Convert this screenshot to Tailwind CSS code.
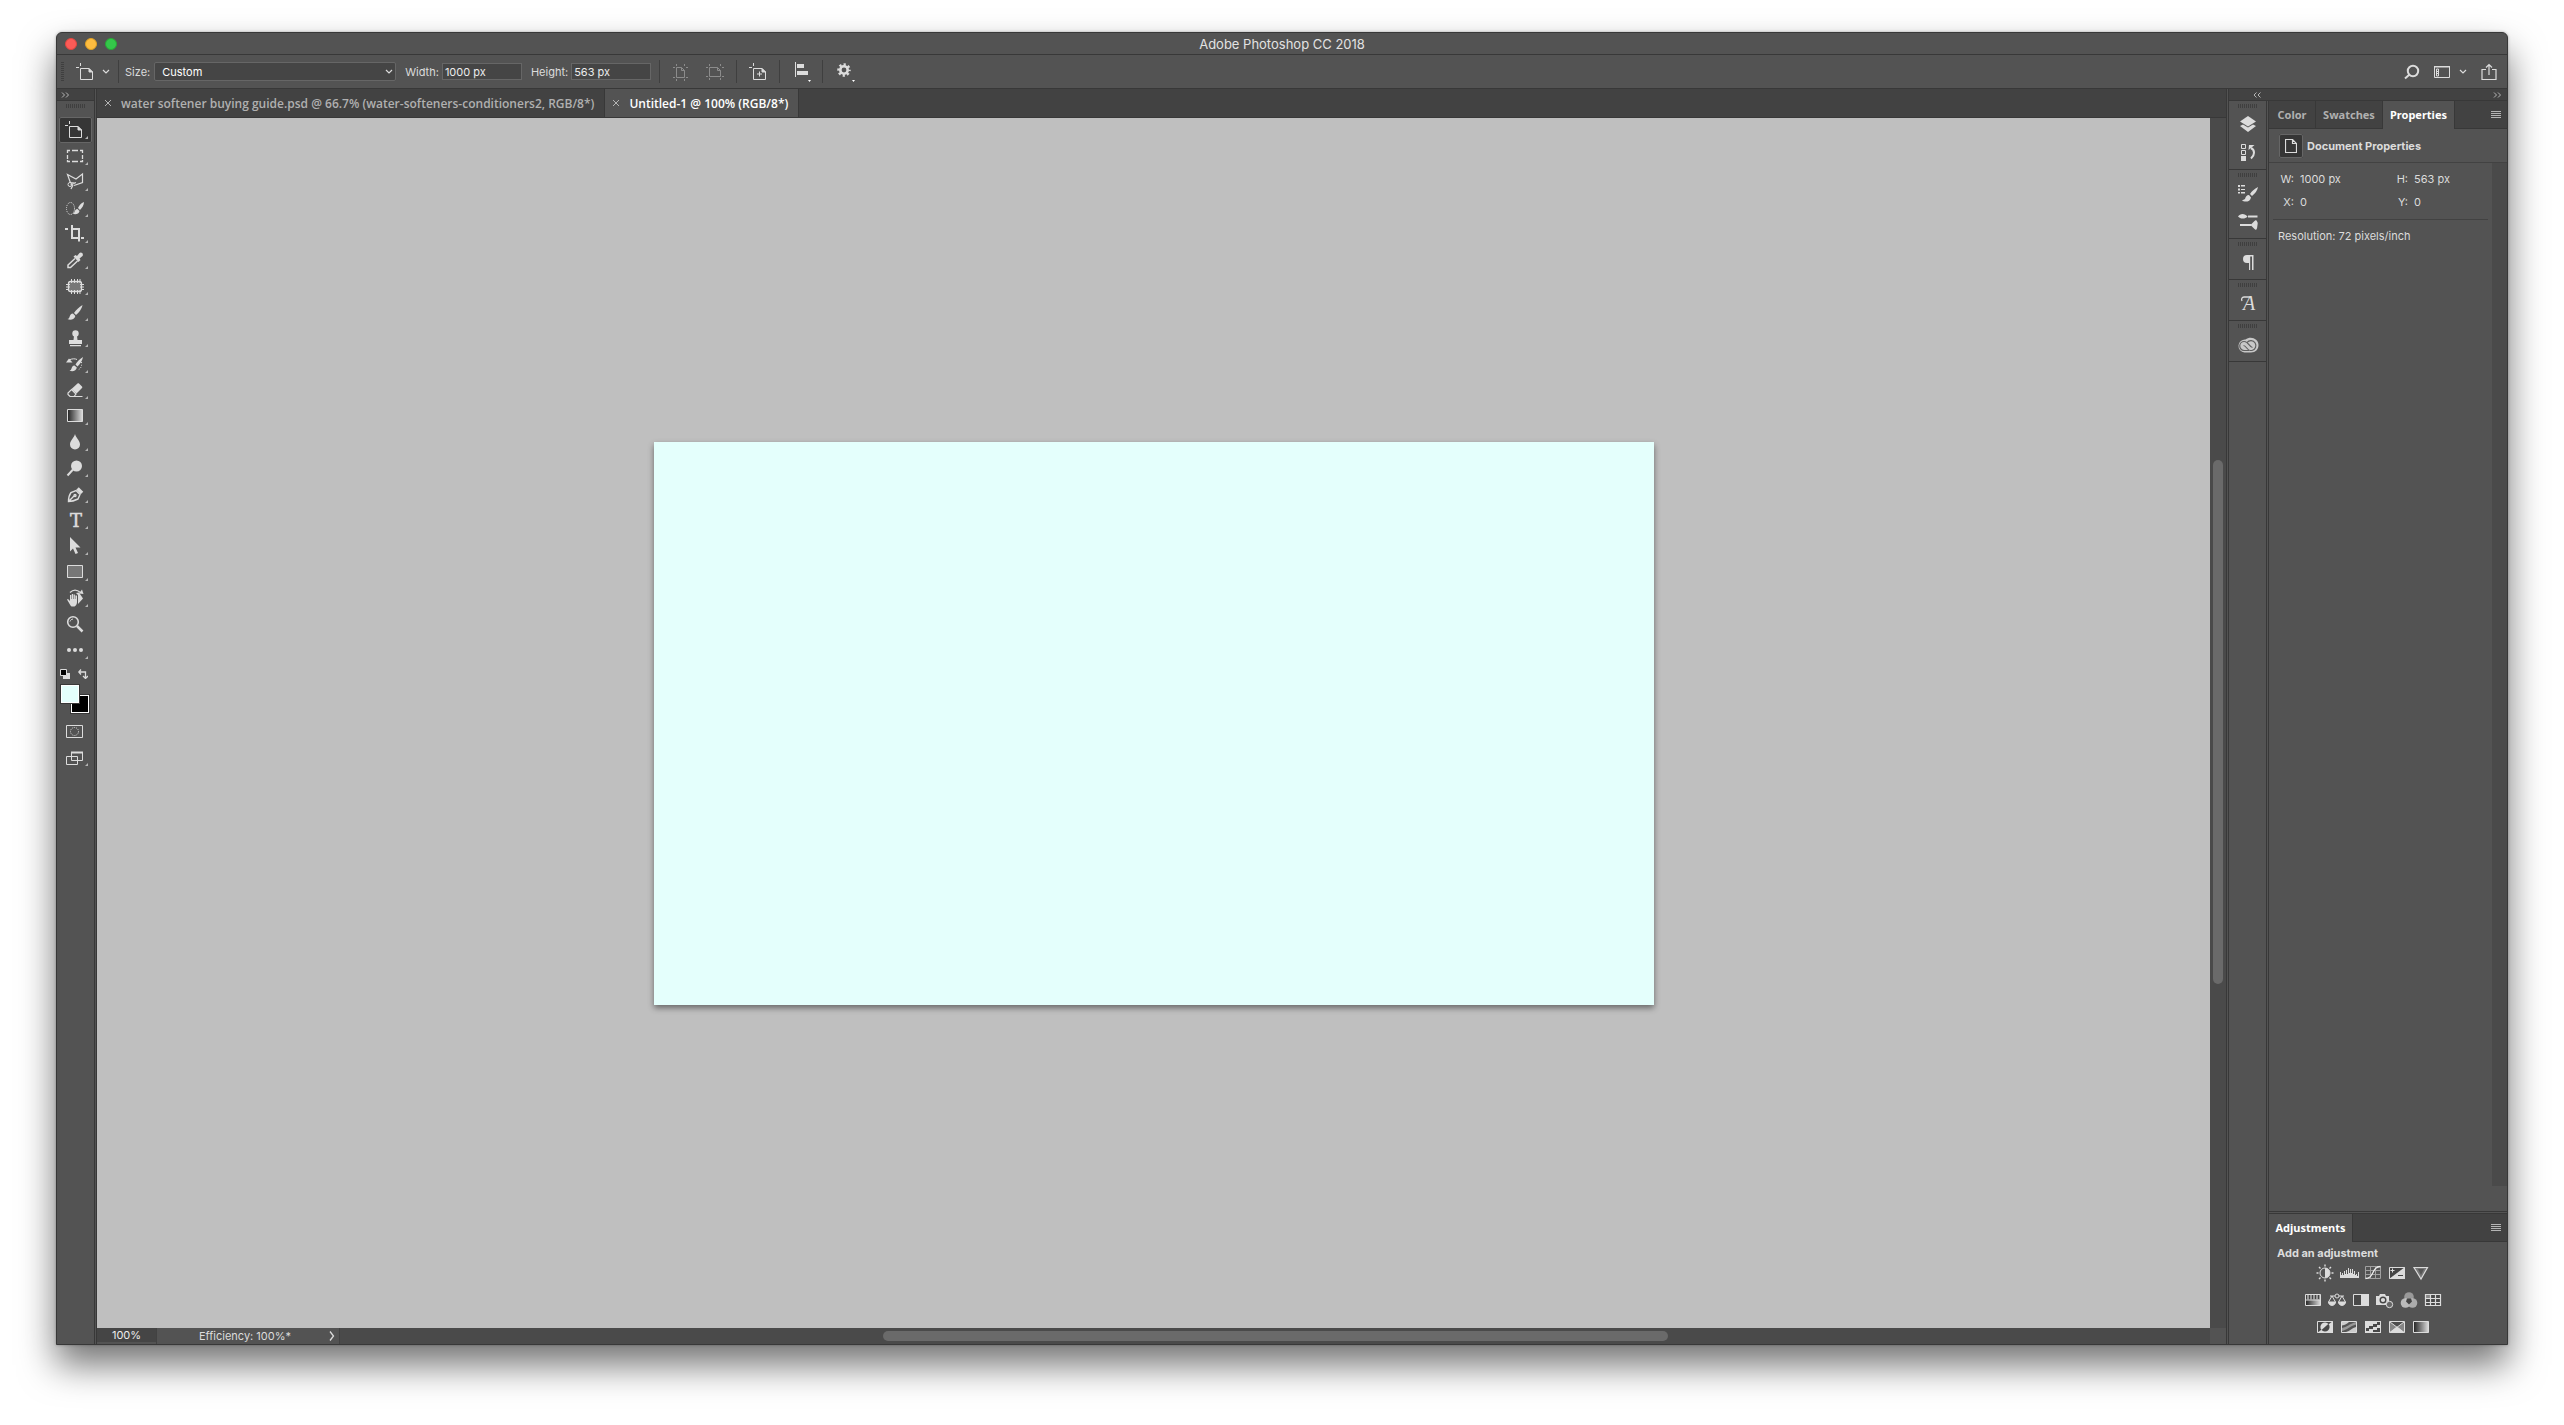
<!DOCTYPE html>
<html lang="en">
<head>
  <meta charset="UTF-8" />
  <meta name="viewport" content="width=device-width, initial-scale=1.0"/>
  <title>Adobe Photoshop CC 2018</title>
  <script src="https://cdn.jsdelivr.net/npm/@tailwindcss/browser@4"></script>
</head>
<body class="bg-white h-screen flex flex-col px-14 pt-8 pb-20 font-['Inter',sans-serif] text-[11px] leading-4 text-[#dcdcdc]">
  <!-- shared icon parts -->
  <svg class="size-0 shrink-0">
    <defs>
      <path id="corner" d="M29 19v3h-3z" fill="#b4b4b4"/>
      <linearGradient id="fade"><stop offset="0" stop-color="#222"/><stop offset="1" stop-color="#ddd"/></linearGradient>
      <symbol id="artboard" viewBox="0 0 18 18"><path d="M4.500 0v3M0 4.500h3" stroke="#dcdcdc" fill="none"/><path d="M4.500 5.500h8.500l3.500 3.500v7.500h-12z" stroke="#dcdcdc" fill="none"/><path d="M13 5.500l3.500 3.500h-3.500z" fill="#dcdcdc" stroke="#dcdcdc"/></symbol>
      <symbol id="grip" viewBox="0 0 20 4"><path d="M0 2h20" stroke="#3f3f3f" stroke-width="4" stroke-dasharray="1 1" fill="none"/></symbol>
      <symbol id="menu" viewBox="0 0 10 8"><path d="M0 .5h10M0 2.500h10M0 4.500h10M0 6.500h10" stroke="#b4b4b4" fill="none"/></symbol>
      <symbol id="down" viewBox="0 0 8 6"><path d="M1 1l3 3 3-3" stroke="#dcdcdc" stroke-width="1.200" fill="none"/></symbol>
      <symbol id="close" viewBox="0 0 8 8"><path d="M1 1l6 6M7 1l-6 6" stroke="#b4b4b4" fill="none"/></symbol>
    </defs>
  </svg>

  <div class="flex-1 min-h-0 flex flex-col rounded-t-md border border-[#383838] bg-[#535353] shadow-[0_20px_36px_rgba(0,0,0,0.55),0_0_3px_rgba(0,0,0,0.3)]">

    <!-- title bar -->
    <header class="h-[22px] shrink-0 flex items-center border-b border-[#383838] px-2">
      <div class="flex-1 flex gap-2">
        <button aria-label="Close" class="size-3 rounded-full bg-[#fc5b57] border border-[#e2463f]"></button>
        <button aria-label="Minimize" class="size-3 rounded-full bg-[#fdbc40] border border-[#dfa023]"></button>
        <button aria-label="Zoom" class="size-3 rounded-full bg-[#34c84a] border border-[#27aa35]"></button>
      </div>
      <h1 class="text-[13px] text-[#e2e2e2]">Adobe Photoshop CC 2018</h1>
      <div class="flex-1"></div>
    </header>

    <!-- options bar -->
    <div class="h-[34px] shrink-0 flex items-center border-b border-[#383838] pl-1">
      <svg class="w-[3px] h-5" viewBox="0 0 3 20"><path d="M1.500 0v20" stroke="#3f3f3f" stroke-width="3" stroke-dasharray="1 1"/></svg>
      <button aria-label="Artboard tool presets" class="ml-3 flex items-center gap-2">
        <svg class="size-[18px]"><use href="#artboard"/></svg>
        <svg class="w-2 h-[6px]"><use href="#down"/></svg>
      </button>
      <div class="ml-2 w-px h-[23px] bg-[#3f3f3f]"></div>
      <label for="size" class="ml-[6px]">Size:</label>
      <div class="relative ml-1">
        <select id="size" class="appearance-none w-[242px] h-[19px] pl-[7px] rounded-xs border border-[#666] bg-[#454545] text-white">
          <option>Custom</option>
        </select>
        <svg class="absolute right-[3px] top-[7px] w-2 h-[6px]"><use href="#down"/></svg>
      </div>
      <label for="width" class="ml-[9px]">Width:</label>
      <input id="width" type="text" value="1000 px" class="ml-[3px] w-20 h-[17px] pl-[2px] border border-[#666] bg-[#454545] text-[#ececec]" />
      <label for="height" class="ml-[9px]">Height:</label>
      <input id="height" type="text" value="563 px" class="ml-[3px] w-20 h-[17px] pl-[2px] border border-[#666] bg-[#454545] text-[#ececec]" />
      <div class="ml-2 w-px h-[23px] bg-[#3f3f3f]"></div>
      <button aria-label="Portrait" class="ml-3">
        <svg class="size-[18px]" viewBox="0 0 18 18" fill="none" stroke="#8c8c8c"><path d="M4.500 4.500h5l3 3v7h-8zM9.500 4.500v3h3M4.500 1v2M12.500 1v2M4.500 16v2M12.500 16v2M1 4.500h2M14 4.500h2M1 14.500h2M14 14.500h2"/></svg>
      </button>
      <button aria-label="Landscape" class="ml-4">
        <svg class="size-[18px]" viewBox="0 0 18 18" fill="none" stroke="#8c8c8c"><path d="M3.500 4.500h8l3 3v6h-11zM11.500 4.500v3h3M3.500 1v2M14.500 1v2M3.500 15v2M14.500 15v2M0 4.500h2M16 4.500h2M0 13.500h2M16 13.500h2"/></svg>
      </button>
      <div class="ml-3 w-px h-[23px] bg-[#3f3f3f]"></div>
      <button aria-label="Add new artboard" class="ml-3">
        <svg class="size-[18px]" viewBox="0 0 18 18"><use href="#artboard"/><path d="M10.500 8.500v5M8 11h5" stroke="#dcdcdc"/></svg>
      </button>
      <div class="ml-3 w-px h-[23px] bg-[#3f3f3f]"></div>
      <button aria-label="Align" class="ml-[14px]">
        <svg class="w-[18px] h-5" viewBox="0 0 18 20"><path d="M1.500 0v15" stroke="#dcdcdc"/><path d="M3 2h7v4H3zM3 9h11v4H3z" fill="#dcdcdc"/><path d="M14 18h3l-1.500 2z" fill="#fff"/></svg>
      </button>
      <div class="ml-[10px] w-px h-[23px] bg-[#3f3f3f]"></div>
      <button aria-label="Options" class="ml-[14px]">
        <svg class="w-[18px] h-5" viewBox="0 0 18 20"><circle cx="7" cy="8" r="5.500" fill="none" stroke="#dcdcdc" stroke-width="2.500" stroke-dasharray="2.200 2.120" stroke-dashoffset="1.100"/><circle cx="7" cy="8" r="3.700" fill="none" stroke="#dcdcdc" stroke-width="2.600"/><path d="M15 18h3l-1.500 2z" fill="#fff"/></svg>
      </button>
      <div class="ml-auto flex items-center pr-[10px]">
        <button aria-label="Search"><svg class="size-4" viewBox="0 0 16 16" fill="none" stroke="#dcdcdc" stroke-width="2"><circle cx="9" cy="7" r="5.200"/><path d="M5.500 10.500L1 14.500"/></svg></button>
        <button aria-label="Workspace" class="ml-[14px] flex items-center gap-[9px]">
          <svg class="w-4 h-[14px]" viewBox="0 0 16 14"><path d="M.5 1.500h15v11H.5z" fill="none" stroke="#dcdcdc"/><path d="M0 1h16v1.500H0z" fill="#dcdcdc"/><path d="M2.500 4v7h2V4zM2 6.500h3M2 8.500h3" fill="none" stroke="#dcdcdc"/></svg>
          <svg class="w-2 h-[6px]"><use href="#down"/></svg>
        </button>
        <button aria-label="Share" class="ml-[14px]"><svg class="w-4 h-[18px]" viewBox="0 0 16 18" fill="none" stroke="#dcdcdc" stroke-width="1.200"><path d="M5 6.500H1v10h14v-10h-4M8 12V1.500M5 4.500l3-3 3 3"/></svg></button>
      </div>
    </div>

    <div class="flex-1 min-h-0 flex">

      <!-- toolbar -->
      <aside class="w-[38px] shrink-0 border-r border-[#383838] flex flex-col">
        <div class="h-3 shrink-0 bg-[#424242] border-b border-[#383838] pl-1 flex items-center">
          <svg class="w-2 h-[6px]" viewBox="0 0 8 6" fill="none" stroke="#b4b4b4"><path d="M1 .5L3.500 3 1 5.500M5 .5L7.500 3 5 5.500"/></svg>
        </div>
        <div class="h-4 shrink-0 flex justify-center pt-[3px]"><svg class="w-5 h-1"><use href="#grip"/></svg></div>
        <nav class="flex flex-col px-[2px] text-[#dcdcdc]">
          <button aria-label="Artboard Tool" class="h-[26px] rounded-xs bg-[#363636] outline outline-[#666] -outline-offset-1">
            <svg class="w-[34px] h-[26px]" viewBox="0 0 34 26"><use href="#artboard" x="6" y="4" width="18" height="18"/><use href="#corner"/></svg>
          </button>
          <button aria-label="Marquee Tool" class="h-[26px]">
            <svg class="w-[34px] h-[26px]" viewBox="0 0 34 26" fill="none" stroke="currentColor"><path d="M8.500 10V7.500H11M13 7.500h6M21 7.500h2.500V10M23.500 12v4M23.500 17v1.500H21M19 18.500h-6M11 18.500H8.500V17M8.500 16v-4" stroke-width="1.300"/><use href="#corner" stroke="none"/></svg>
          </button>
          <button aria-label="Polygonal Lasso Tool" class="h-[26px]">
            <svg class="w-[34px] h-[26px]" viewBox="0 0 34 26" fill="none" stroke="currentColor"><path d="M11.500 14L8.500 5.500 17 10l6.500-5v8.500L15 16.500M17 13.500l-5.500 2.500M11.500 13.500l4.500.5M14 16l-2 4" stroke-width="1.200"/><circle cx="11" cy="15.500" r="2"/><use href="#corner" stroke="none"/></svg>
          </button>
          <button aria-label="Quick Selection Tool" class="h-[26px]">
            <svg class="w-[34px] h-[26px]" viewBox="0 0 34 26"><ellipse cx="11.500" cy="13.500" rx="4" ry="6" fill="none" stroke="currentColor" stroke-dasharray="1 1"/><path d="M25 7c-3 1-5 3.500-6 6l2 2c2-2 4-5 4-8zM18.500 14c-2 0-2.500 1.500-3 3-.5 1-1.500 1.500-2 1.500 2 1.500 6.500 1 7-2.500z" fill="currentColor"/><use href="#corner"/></svg>
          </button>
          <button aria-label="Crop Tool" class="h-[26px]">
            <svg class="w-[34px] h-[26px]" viewBox="0 0 34 26" fill="none" stroke="currentColor" stroke-width="2"><path d="M13 4v13H19M6 8h3M12 8h8v12.500M22 17h3"/><use href="#corner" stroke="none"/></svg>
          </button>
          <button aria-label="Eyedropper Tool" class="h-[26px]">
            <svg class="w-[34px] h-[26px]" viewBox="0 0 34 26"><path d="M16 11.500l-7 6.500v2.500h2.500l7-6.500" fill="none" stroke="currentColor" stroke-width="1.500"/><path d="M14.500 9.500l2-1.500 1.500 1 2.500-3c1.500-1.500 4.500.5 3 3l-3 2.500 1 1.500-2 2z" fill="currentColor"/><use href="#corner"/></svg>
          </button>
          <button aria-label="Patch Tool" class="h-[26px]">
            <svg class="w-[34px] h-[26px]" viewBox="0 0 34 26" stroke="currentColor"><rect x="9.500" y="8.500" width="13" height="10" rx="2" fill="#777" stroke-width="1.300"/><path d="M12.500 6v4M15.500 6v4M18.500 6v4M21 6v4M12.500 17v4M15.500 17v4M18.500 17v4M21 17v4M7 11.500h4M7 14h4M7 16.500h3M21 11.500h4M21 14h4M22 16.500h3"/><use href="#corner" stroke="none"/></svg>
          </button>
          <button aria-label="Brush Tool" class="h-[26px]">
            <svg class="w-[34px] h-[26px]" viewBox="0 0 34 26" fill="currentColor"><path d="M23.500 6c-3.500 2-6.500 5-8.500 8l2 2c3-2.500 6-6.500 6.500-10zM14 14.500c-2 .2-3 1.500-3.500 3.500-.3 1-1 2-2 2 2.500 1.500 7.500.5 7.800-3z"/><use href="#corner"/></svg>
          </button>
          <button aria-label="Clone Stamp Tool" class="h-[26px]">
            <svg class="w-[34px] h-[26px]" viewBox="0 0 34 26" fill="currentColor"><circle cx="16.500" cy="8.500" r="3.200"/><path d="M15 11h3l.5 4H23v4H10v-4h4.500zM11 20h11v1.200H11z"/><use href="#corner"/></svg>
          </button>
          <button aria-label="History Brush Tool" class="h-[26px]">
            <svg class="w-[34px] h-[26px]" viewBox="0 0 34 26" fill="currentColor"><path d="M24 6c-3.500 2-6 5-7.500 7.500l2 2C21 13 23.500 9.500 24 6zM15.500 14.500c-2 .2-2.500 1.500-3 3-.3 1-1 2-2 2 2.500 1.500 7 .5 7.300-3zM7 11.500L10 7.500l3.500 4z"/><path d="M10 9c3-1.500 6-1.500 8-.5" fill="none" stroke="currentColor"/><path d="M22.500 11c.5 4-.5 7-4 8" fill="none" stroke="currentColor" stroke-dasharray="1 1.500"/><use href="#corner"/></svg>
          </button>
          <button aria-label="Eraser Tool" class="h-[26px]">
            <svg class="w-[34px] h-[26px]" viewBox="0 0 34 26" fill="currentColor"><path d="M12.500 12l6-5.500c.5-.5 1-.5 1.500 0l3 3c.5.500.5 1 0 1.500l-5.500 5.500z"/><path d="M12.500 12.500l4.500 4.500-2 2.500h-4L9 17.500V16zM15 19.500h8.500" fill="none" stroke="currentColor" stroke-width="1.200"/><use href="#corner"/></svg>
          </button>
          <button aria-label="Gradient Tool" class="h-[26px]">
            <svg class="w-[34px] h-[26px]" viewBox="0 0 34 26"><path d="M8.500 6.500h15v12h-15z" fill="url(#fade)" stroke="currentColor"/><use href="#corner"/></svg>
          </button>
          <button aria-label="Blur Tool" class="h-[26px]">
            <svg class="w-[34px] h-[26px]" viewBox="0 0 34 26" fill="currentColor"><path d="M16 5c1 4 5 6.500 5 10.500a5 5 0 0 1-10 0C11 11.500 15 9 16 5z"/><use href="#corner"/></svg>
          </button>
          <button aria-label="Dodge Tool" class="h-[26px]">
            <svg class="w-[34px] h-[26px]" viewBox="0 0 34 26" fill="currentColor"><circle cx="17.500" cy="11" r="5.500"/><path d="M14 14.500l-5.500 6" stroke="currentColor" stroke-width="2"/><use href="#corner"/></svg>
          </button>
          <button aria-label="Pen Tool" class="h-[26px]">
            <svg class="w-[34px] h-[26px]" viewBox="0 0 34 26" fill="none" stroke="currentColor" stroke-width="1.400"><path d="M9.500 20.500c0-4 1-7 2.500-9l5-2 4 4-2 4.500c-3 1.500-6 2.500-9.500 2.500zM10 20l5-5"/><circle cx="16" cy="14.500" r="1"/><path d="M18.500 7.500l4.500 4.500" stroke-width="3.500"/><use href="#corner" stroke="none"/></svg>
          </button>
          <button aria-label="Type Tool" class="h-[26px]">
            <svg class="w-[34px] h-[26px]" viewBox="0 0 34 26" fill="currentColor"><text x="17" y="20" text-anchor="middle" class="font-['DejaVu_Serif',serif] text-[18px]" stroke="currentColor" stroke-width=".5">T</text><use href="#corner"/></svg>
          </button>
          <button aria-label="Path Selection Tool" class="h-[26px]">
            <svg class="w-[34px] h-[26px]" viewBox="0 0 34 26" fill="currentColor"><path d="M11 4l10.500 10.500h-5l2.500 5.500-2.500 1-2.500-5.500-3 3z"/><use href="#corner"/></svg>
          </button>
          <button aria-label="Rectangle Tool" class="h-[26px]">
            <svg class="w-[34px] h-[26px]" viewBox="0 0 34 26"><path d="M8.500 6.500h15v12h-15z" fill="#777" stroke="currentColor"/><use href="#corner"/></svg>
          </button>
          <button aria-label="Rotate View Tool" class="h-[26px]">
            <svg class="w-[34px] h-[26px]" viewBox="0 0 34 26" fill="currentColor"><path d="M11.500 20.500L8 14.500l1-.5 2 2V10h1.300v4h.5V9h1.300v5h.5V9.500h1.300V14h.5v-3.500H18V17c0 2-1 3.500-2.500 4.500h-3zM17 8l3-.5 4 6-5 5.500v-9z"/><path d="M11 7.500c3-3 7-3 10.500 0" fill="none" stroke="currentColor" stroke-width="1.300"/><path d="M20 8.500L24.500 9 23 4.500z"/><use href="#corner"/></svg>
          </button>
          <button aria-label="Zoom Tool" class="h-[26px]">
            <svg class="w-[34px] h-[26px]" viewBox="0 0 34 26" fill="none" stroke="currentColor"><circle cx="14" cy="11" r="5.300" stroke-width="1.600"/><path d="M11 10.500c.5-1.500 1.500-2.300 3-2.500"/><path d="M18 15l5.500 5.500" stroke-width="2.500"/></svg>
          </button>
          <button aria-label="Edit Toolbar" class="h-[26px]">
            <svg class="w-[34px] h-[26px]" viewBox="0 0 34 26" fill="currentColor"><circle cx="10" cy="13" r="2"/><circle cx="16" cy="13" r="2"/><circle cx="22" cy="13" r="2"/><use href="#corner"/></svg>
          </button>
          <div class="h-[21px] flex gap-2 pl-[1px] items-center">
            <button aria-label="Default colors"><svg class="size-[10px]" viewBox="0 0 10 10"><path d="M3 4h7v6H3z" fill="#dcdcdc"/><path d="M.5.5h6v6h-6z" fill="#000" stroke="#dcdcdc"/></svg></button>
            <button aria-label="Switch colors"><svg class="size-[10px]" viewBox="0 0 10 10" fill="none" stroke="#dcdcdc" stroke-width="1.300"><path d="M1 3h6.500v6M3 .5L.8 3 3 5.500M5 7l2.500 2.500L10 7"/></svg></button>
          </div>
          <!-- foreground colour lies over background colour -->
          <div class="relative h-[30px]">
            <button aria-label="Background color" class="absolute left-3 top-[11px] size-[18px] bg-black border border-white outline outline-[#383838]"></button>
            <button aria-label="Foreground color" class="absolute left-[2px] top-px size-[18px] bg-[#e4fffc] border border-white outline outline-[#383838]"></button>
          </div>
          <button aria-label="Quick Mask" class="mt-1 h-[26px]">
            <svg class="w-[34px] h-[26px]" viewBox="0 0 34 26" fill="none" stroke="currentColor"><path d="M7.500 7.500h16v12h-16z"/><circle cx="15.500" cy="13.500" r="4" stroke-dasharray="1 1"/></svg>
          </button>
          <button aria-label="Screen Mode" class="h-[26px]">
            <svg class="w-[34px] h-[26px]" viewBox="0 0 34 26" fill="#535353" stroke="currentColor"><path d="M7.500 12.500h11v8h-11zM12.500 8.500h11v8h-11z"/><path d="M12 8.500h12" stroke-width="2"/><use href="#corner" stroke="none"/></svg>
          </button>
        </nav>
      </aside>

      <!-- document -->
      <main class="ml-px flex-1 min-w-0 flex flex-col border-x border-[#383838]">
        <div class="h-[29px] shrink-0 flex bg-[#424242] border-b border-[#383838] font-['Open_Sans',sans-serif] text-xs font-semibold text-[#b0b0b0]">
          <div class="flex items-center gap-[9px] pl-[7px] pr-[10px] border-r border-[#383838]">
            <button aria-label="Close tab"><svg class="size-2"><use href="#close"/></svg></button>
            <button class="pt-px">water softener buying guide.psd @ 66.7% (water-softeners-conditioners2, RGB/8*)</button>
          </div>
          <div class="flex items-center gap-[9px] pl-[7px] pr-[10px] border-r border-[#383838] bg-[#535353] text-white">
            <button aria-label="Close tab"><svg class="size-2"><use href="#close"/></svg></button>
            <button class="pt-px">Untitled-1 @ 100% (RGB/8*)</button>
          </div>
        </div>
        <div class="flex-1 min-h-0 flex">
          <div class="flex-1 min-w-0 bg-[#bfbfbf] flex items-center justify-center">
            <div class="w-[1000px] h-[563px] bg-[#e4fffc] shadow-[0_3px_6px_rgba(0,0,0,0.45)]"></div>
          </div>
          <div class="w-4 bg-[#4a4a4a] flex flex-col items-center">
            <div class="flex-[342]"></div>
            <div class="flex-[524] w-[10px] rounded-full bg-[#6a6a6a]"></div>
            <div class="flex-[344]"></div>
          </div>
        </div>
        <div class="h-4 shrink-0 flex">
          <input aria-label="Zoom level" type="text" value="100%" class="w-[59px] h-[14px] text-center bg-[#454545] text-[#ececec]" />
          <div class="w-[184px] flex items-center border-x border-[#424242] pl-[42px] pr-1">
            <span>Efficiency: 100%*</span>
            <button aria-label="Status menu" class="ml-auto"><svg class="w-[6px] h-[10px]" viewBox="0 0 6 10"><path d="M1 .5L4.500 5 1 9.500" fill="none" stroke="#dcdcdc" stroke-width="1.300"/></svg></button>
          </div>
          <div class="flex-1 bg-[#4a4a4a] flex items-center">
            <div class="flex-[543]"></div>
            <div class="flex-[784] h-[10px] rounded-full bg-[#6a6a6a]"></div>
            <div class="flex-[542]"></div>
          </div>
          <div class="w-4"></div>
        </div>
      </main>

      <!-- right dock -->
      <aside class="ml-px w-[279px] shrink-0 border-l border-[#383838] flex flex-col">
        <div class="h-3 shrink-0 flex items-center bg-[#424242] border-b border-[#383838] pl-6 pr-[6px]">
          <svg class="w-2 h-[6px]" viewBox="0 0 8 6" fill="none" stroke="#b4b4b4"><path d="M3.500.5L1 3l2.500 2.500M7.500.5L5 3l2.500 2.500"/></svg>
          <svg class="ml-auto w-2 h-[6px]" viewBox="0 0 8 6" fill="none" stroke="#b4b4b4"><path d="M1 .5L3.500 3 1 5.500M5 .5L7.500 3 5 5.500"/></svg>
        </div>
        <div class="flex-1 min-h-0 flex">
          <!-- collapsed panels -->
          <div class="w-[38px] shrink-0 border-r border-[#383838]">
            <div class="flex flex-col items-center border-b border-[#383838] pt-[3px] pb-[2px]">
              <svg class="w-5 h-1"><use href="#grip"/></svg>
              <button aria-label="Layers" class="mt-[3px] h-7">
                <svg class="w-6 h-6" viewBox="0 0 24 24"><path d="M12 3l8 5.500-8 5-8-5z" fill="#dcdcdc"/><path d="M4 13l3-1.500 5 3 5-3 3 1.500-8 6z" fill="#dcdcdc"/></svg>
              </button>
              <button aria-label="History" class="h-7">
                <svg class="w-6 h-6" viewBox="0 0 24 24"><path d="M5.500 3.500h4v4h-4zM5.500 9.500h4v4h-4z" fill="none" stroke="#dcdcdc"/><path d="M5 15h5v5H5z" fill="#dcdcdc"/><path d="M15 7c4 2 4 7 0 10.500" fill="none" stroke="#dcdcdc" stroke-width="2"/><path d="M12.500 9L13 4h5.500z" fill="#dcdcdc"/></svg>
              </button>
            </div>
            <div class="flex flex-col items-center border-b border-[#383838] pt-[3px] pb-[2px]">
              <svg class="w-5 h-1"><use href="#grip"/></svg>
              <button aria-label="Brush presets" class="mt-[3px] h-7">
                <svg class="w-6 h-6" viewBox="0 0 24 24" fill="#dcdcdc"><path d="M22 5c-3.500 1.500-6.500 4.500-8 7l2 2c3-2.500 5.500-5.500 6-9zM13 13c-2.500 0-3.500 2-4 4l-3 1.500c2.500 2 8.500 1.500 9-3z"/><path d="M2 3h2v2H2zM5 3h4v1.500H5zM2 6.500h2v2H2zM5 7h4v1H5zM2 10h2v1.500H2zM5 10h4v1.500H5z"/></svg>
              </button>
              <button aria-label="Brush settings" class="h-7">
                <svg class="w-6 h-6" viewBox="0 0 24 24" fill="#dcdcdc"><path d="M2 6.500C4 3 9 3 11.500 6.500 9 9.500 4 9 2 6.500zM12 5.500h9.500v2H12zM4 14h11v2H4z"/><path d="M14 15c2-1 4-4 6-5 1.500 1.500 2 3 1.500 5s0 3.500-1.500 5c-2-1-4-4-6-5z"/></svg>
              </button>
            </div>
            <div class="flex flex-col items-center border-b border-[#383838] pt-[3px] pb-[2px]">
              <svg class="w-5 h-1"><use href="#grip"/></svg>
              <button aria-label="Paragraph" class="mt-[3px] h-7">
                <svg class="w-6 h-6" viewBox="0 0 24 24"><path d="M17.500 4H11a4 4 0 0 0 0 8h2v7h1.200V5.500H16V19h1.500z" fill="#dcdcdc"/></svg>
              </button>
            </div>
            <div class="flex flex-col items-center border-b border-[#383838] pt-[3px] pb-[2px]">
              <svg class="w-5 h-1"><use href="#grip"/></svg>
              <button aria-label="Glyphs" class="mt-[3px] h-7">
                <svg class="w-6 h-6" viewBox="0 0 24 24"><text x="13" y="18" text-anchor="middle" fill="#dcdcdc" class="font-['Liberation_Serif',serif] text-[20px] italic">A</text><path d="M15 5H8c-2 0-3 2-2 4" fill="none" stroke="#dcdcdc" stroke-width="1.300"/></svg>
              </button>
            </div>
            <div class="flex flex-col items-center border-b border-[#383838] pt-[3px] pb-[2px]">
              <svg class="w-5 h-1"><use href="#grip"/></svg>
              <button aria-label="Creative Cloud Libraries" class="mt-[3px] h-7">
                <svg class="w-6 h-6" viewBox="0 0 24 24"><path d="M8.500 19.500a6.500 6.500 0 1 1 1-13c5-4 13-1 13 5.500 0 4.500-3 7.500-7.500 7.500z" fill="#c8c8c8"/><path d="M16 17.500h-2c-2.500 0-4-5-6.500-5M13 17.500H8a4.500 4.500 0 1 1 .5-9c3.500 0 5.500 6 8 6M11 9.500a5 5 0 1 1 5 8" fill="none" stroke="#5e5e5e" stroke-width="1.200"/></svg>
              </button>
            </div>
          </div>

          <!-- open panels -->
          <div class="ml-px flex-1 min-w-0 flex flex-col border-l border-[#383838]">
            <section class="flex-1 min-h-0 flex flex-col border-b border-[#383838]">
              <div class="h-7 shrink-0 flex bg-[#424242] font-['Noto_Sans','Open_Sans',sans-serif] font-bold text-[#b0b0b0]">
                <button class="w-[47px] border-r border-b border-[#383838]">Color</button>
                <button class="w-[67px] border-r border-b border-[#383838]">Swatches</button>
                <button class="w-[72px] border-r border-[#383838] bg-[#535353] text-white">Properties</button>
                <div class="flex-1 flex items-center justify-end pr-[6px] border-b border-[#383838]">
                  <button aria-label="Panel menu"><svg class="w-[10px] h-2"><use href="#menu"/></svg></button>
                </div>
              </div>
              <div class="h-[34px] shrink-0 flex items-center gap-1 pl-[10px] border-b border-[#424242]">
                <div class="size-6 rounded-xs bg-[#363636] outline outline-[#666] -outline-offset-1 flex items-center justify-center">
                  <svg class="w-3 h-[14px]" viewBox="0 0 12 14" fill="none" stroke="#dcdcdc"><path d="M.5.5h7l4 4v9H.5zM7.500.5v4h4" stroke-width="1.200"/></svg>
                </div>
                <h2 class="font-bold">Document Properties</h2>
              </div>
              <div class="flex-1 min-h-0 flex">
                <div class="flex-1 pt-2 px-1">
                  <dl class="grid grid-cols-[21px_82px_20px_1fr] gap-x-[6px] gap-y-[7px] text-right pb-[9px] border-b border-[#424242]">
                    <dt>W:</dt><dd class="text-left">1000 px</dd>
                    <dt>H:</dt><dd class="text-left">563 px</dd>
                    <dt>X:</dt><dd class="text-left">0</dd>
                    <dt>Y:</dt><dd class="text-left">0</dd>
                  </dl>
                  <p class="pt-2 pl-[5px]">Resolution: 72 pixels/inch</p>
                </div>
                <div class="w-[15px] mb-[25px] bg-[#4a4a4a]"></div>
              </div>
            </section>

            <section class="mt-px shrink-0 border-t border-[#383838]">
              <div class="h-7 flex bg-[#424242]">
                <button class="w-[84px] border-r border-[#383838] bg-[#535353] font-['Noto_Sans','Open_Sans',sans-serif] font-bold text-white">Adjustments</button>
                <div class="flex-1 flex items-center justify-end pr-[6px] border-b border-[#383838]">
                  <button aria-label="Panel menu"><svg class="w-[10px] h-2"><use href="#menu"/></svg></button>
                </div>
              </div>
              <h2 class="pl-2 pt-[3px] font-bold">Add an adjustment</h2>
              <div class="flex flex-col gap-[3px] pr-[30px] pb-[5px]">
                <div class="flex justify-center">
                  <button aria-label="Brightness/Contrast"><svg class="size-6" viewBox="0 0 24 24"><circle cx="12" cy="12" r="5" fill="none" stroke="#dcdcdc"/><path d="M12 7a5 5 0 0 1 0 10z" fill="#dcdcdc"/><path d="M12 3.500v2M12 18.500v2M3.500 12h2M18.500 12h2M6 6l1.500 1.500M16.500 16.500L18 18M18 6l-1.500 1.500M7.500 16.500L6 18" stroke="#dcdcdc" stroke-width="1.400"/></svg></button>
                  <button aria-label="Levels"><svg class="size-6" viewBox="0 0 24 24"><path d="M3 17v-6h1v3h1v-2h1v2h1v-4h1v3h1V9h1v4h1V7h1v5h1V8h1v4h1V8h1v5h1v-3h1v4h1v-1h1v2h1v-4h1v6z" fill="#dcdcdc"/></svg></button>
                  <button aria-label="Curves"><svg class="size-6" viewBox="0 0 24 24" fill="none"><path d="M4.500 5.500h15v12h-15zM9.500 5.500v12M14.500 5.500v12M4.500 9.500h15M4.500 13.500h15" stroke="#a0a0a0"/><path d="M4.500 17.500c9 0 6-12 15-12" stroke="#eee" stroke-width="1.300"/></svg></button>
                  <button aria-label="Exposure"><svg class="size-6" viewBox="0 0 24 24"><path d="M4.500 6.500h15v11h-15z" fill="#444" stroke="#dcdcdc"/><path d="M20 6v12H4z" fill="#dcdcdc"/><path d="M5.500 9.500h4M7.500 7.500v4" stroke="#dcdcdc"/><path d="M13 14.500h5" stroke="#444"/></svg></button>
                  <button aria-label="Vibrance"><svg class="size-6" viewBox="0 0 24 24"><path d="M5 6.500h13.500L12 18z" fill="#777" stroke="#dcdcdc" stroke-width="1.200"/><path d="M9 8h6l-3 6z" fill="#555"/></svg></button>
                </div>
                <div class="flex justify-center">
                  <button aria-label="Hue/Saturation"><svg class="size-6" viewBox="0 0 24 24"><path d="M4.500 6.500h15v11h-15z" fill="url(#fade)"/><path d="M5 9h14" stroke="#444" stroke-width="5"/><path d="M6 9h13" stroke="#999" stroke-width="5" stroke-dasharray="2 1"/><path d="M4.500 6.500h15v11h-15zM4.500 12h15" fill="none" stroke="#dcdcdc"/></svg></button>
                  <button aria-label="Color Balance"><svg class="size-6" viewBox="0 0 24 24" fill="none" stroke="#dcdcdc"><path d="M5 8h14M7 8l-3.500 6M7 8l3.500 6M17 8l-3.500 6M17 8l3.500 6"/><circle cx="12" cy="8" r="2" fill="#535353"/><path d="M3.500 14h7c0 4.500-7 4.500-7 0zM13.500 14h7c0 4.500-7 4.500-7 0z" fill="#dcdcdc"/></svg></button>
                  <button aria-label="Black &amp; White"><svg class="size-6" viewBox="0 0 24 24"><path d="M4.500 6.500h15v11h-15z" fill="#484848" stroke="#dcdcdc"/><path d="M12 6h8v12h-8z" fill="#dcdcdc"/></svg></button>
                  <button aria-label="Photo Filter"><svg class="size-6" viewBox="0 0 24 24"><path d="M3 8h3l1-2h5l1 2h3v9H3z" fill="#dcdcdc"/><circle cx="10" cy="12" r="2.800" fill="#dcdcdc" stroke="#444" stroke-width="1.400"/><circle cx="16.500" cy="16.500" r="3.200" fill="#666" stroke="#dcdcdc"/></svg></button>
                  <button aria-label="Channel Mixer"><svg class="size-6" viewBox="0 0 24 24"><circle cx="12" cy="9" r="4.800" fill="#999"/><circle cx="8.500" cy="15" r="4.800" fill="#ccc" fill-opacity=".85"/><circle cx="15.500" cy="15" r="4.800" fill="#bbb" fill-opacity=".85"/><path d="M10 10.500h4l1 3-3 3-3-3z" fill="#444"/></svg></button>
                  <button aria-label="Color Lookup"><svg class="size-6" viewBox="0 0 24 24"><path d="M4.500 6.500h15v11h-15z" fill="#484848"/><path d="M5 7h5v3H5z" fill="#888"/><path d="M4.500 6.500h15v11h-15zM9.500 6.500v11M14.500 6.500v11M4.500 10.500h15M4.500 14.500h15" fill="none" stroke="#dcdcdc" stroke-width="1.200"/></svg></button>
                </div>
                <div class="flex justify-center">
                  <button aria-label="Invert"><svg class="size-6" viewBox="0 0 24 24"><path d="M4.500 6.500h15v11h-15z" fill="#484848" stroke="#dcdcdc"/><path d="M20 6v12H4z" fill="#dcdcdc"/><path d="M8.500 15a4.200 4.200 0 0 1 7-6z" fill="#dcdcdc"/><path d="M8.500 15a4.200 4.200 0 0 0 7-6z" fill="#484848"/></svg></button>
                  <button aria-label="Posterize"><svg class="size-6" viewBox="0 0 24 24"><path d="M4.500 6.500h15v11h-15z" fill="#555"/><path d="M5 13c5-1 7-4 14-6v2.500C13 11 10 15 5 16z" fill="#999"/><path d="M9 17c4-1 6-4 10-5v5z" fill="#ccc"/><path d="M5 7h7c-2 2-4 3-7 3.500z" fill="#ccc"/><path d="M4.500 6.500h15v11h-15z" fill="none" stroke="#dcdcdc"/></svg></button>
                  <button aria-label="Threshold"><svg class="size-6" viewBox="0 0 24 24"><path d="M4 6h16v12H4z" fill="#dcdcdc"/><path d="M5 13h3v-2h4V9h4V7h3v3h-3v2h-4v2H8v2H5zM12 17v-2h4v-2h3v4z" fill="#484848"/></svg></button>
                  <button aria-label="Selective Color"><svg class="size-6" viewBox="0 0 24 24"><path d="M4.500 6.500h15v11h-15z" fill="#858585"/><path d="M5 7h14l-7 5.500z" fill="#4c4c4c"/><path d="M5 17h14l-7-5.500z" fill="#dcdcdc"/><path d="M4.500 6.500h15v11h-15zM5 7l14 10.500M19 7L5 17.500" fill="none" stroke="#dcdcdc"/></svg></button>
                  <button aria-label="Gradient Map"><svg class="size-6" viewBox="0 0 24 24"><path d="M4.500 6.500h15v11h-15z" fill="url(#fade)" stroke="#dcdcdc"/></svg></button>
                </div>
              </div>
            </section>
          </div>
        </div>
      </aside>
    </div>
  </div>
</body>
</html>
